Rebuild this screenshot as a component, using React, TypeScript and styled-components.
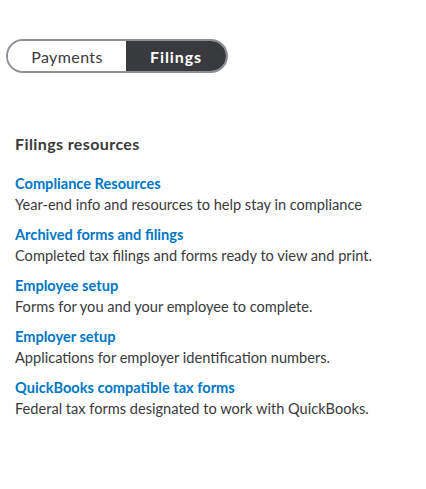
import React, { useState } from "react";
import styled, { createGlobalStyle } from "styled-components";

const Global = createGlobalStyle`
  html, body { margin: 0; padding: 0; background: #fff; }
  body { font-family: "Lato", "Open Sans", sans-serif; color: #393a3d; }
`;

const Page = styled.div`
  padding: 39px 0 0 6px;
`;

const Toggle = styled.div`
  display: inline-flex;
  height: 34px;
  border: 2px solid #8d9096;
  border-radius: 17px;
  overflow: hidden;
  box-sizing: border-box;
`;

const Seg = styled.button<{ $active: boolean; $w: number }>`
  width: ${(p) => p.$w}px;
  border: none;
  margin: 0;
  padding: 0;
  font-family: inherit;
  font-size: 16px;
  font-weight: ${(p) => (p.$active ? 700 : 400)};
  letter-spacing: ${(p) => (p.$active ? "0.9px" : "0.4px")};
  color: ${(p) => (p.$active ? "#fff" : "#393a3d")};
  background: ${(p) => (p.$active ? "#393a3d" : "#fff")};
  cursor: pointer;
`;

const Section = styled.section`
  padding: 61px 0 0 9px;
`;

const Heading = styled.h2`
  margin: 0 0 19px;
  font-size: 16px;
  font-weight: 700;
  letter-spacing: 0.4px;
  line-height: 20px;
`;

const List = styled.ul`
  list-style: none;
  margin: 0;
  padding: 0;
  display: flex;
  flex-direction: column;
  gap: 9px;
`;

const Item = styled.li`
  display: flex;
  flex-direction: column;
`;

const Link = styled.a`
  color: #0077c5;
  font-size: 14.6px;
  font-weight: 700;
  line-height: 21px;
  text-decoration: none;
`;

const Desc = styled.span`
  font-size: 14.6px;
  line-height: 21px;
`;

const resources = [
  ["Compliance Resources", "Year-end info and resources to help stay in compliance"],
  ["Archived forms and filings", "Completed tax filings and forms ready to view and print."],
  ["Employee setup", "Forms for you and your employee to complete."],
  ["Employer setup", "Applications for employer identification numbers."],
  ["QuickBooks compatible tax forms", "Federal tax forms designated to work with QuickBooks."],
];

export default function App() {
  const [tab, setTab] = useState("Filings");
  return (
    <Page>
      <Global />
      <Toggle>
        <Seg $w={118} $active={tab === "Payments"} onClick={() => setTab("Payments")}>Payments</Seg>
        <Seg $w={100} $active={tab === "Filings"} onClick={() => setTab("Filings")}>Filings</Seg>
      </Toggle>
      <Section>
        <Heading>Filings resources</Heading>
        <List>
          {resources.map(([t, d]) => (
            <Item key={t}>
              <Link href="#">{t}</Link>
              <Desc>{d}</Desc>
            </Item>
          ))}
        </List>
      </Section>
    </Page>
  );
}
